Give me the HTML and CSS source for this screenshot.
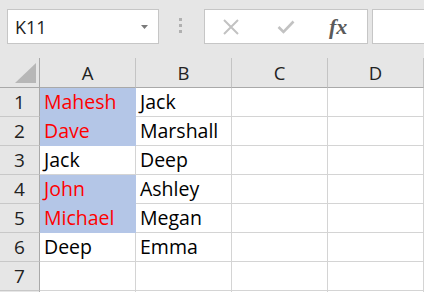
FILE: index.html
```html
<!DOCTYPE html>
<html>
<head>
<meta charset="utf-8">
<link rel="stylesheet" href="styles.css">
</head>
<body>
<div class="toolbar">
  <div class="namebox">
    <span class="ref">K11</span>
    <svg class="caret" width="7" height="4" viewBox="0 0 7 4"><polygon points="0,0 7,0 3.5,4" fill="#7a7a7a"/></svg>
  </div>
  <div class="dots"><i></i><i></i><i></i></div>
  <div class="fbuttons">
    <svg class="ico-x" width="18" height="16" viewBox="0 0 18 16"><path d="M2 1 L16 15 M16 1 L2 15" stroke="#c2c2c2" stroke-width="2" fill="none"/></svg>
    <svg class="ico-check" width="18" height="14" viewBox="0 0 18 14"><path d="M1.5 7 L6.5 12 L16.5 1.5" stroke="#c2c2c2" stroke-width="2.6" fill="none"/></svg>
    <span class="fx">fx</span>
  </div>
  <div class="finput"></div>
</div>
<div class="sheet">
  <div class="corner"><svg width="22" height="21" viewBox="0 0 22 21"><polygon points="21,0 21,20 0,20" fill="#b7b7b7"/></svg></div>
  <div class="ch">A</div><div class="ch">B</div><div class="ch">C</div><div class="ch">D</div>

  <div class="rh">1</div><div class="c sel red">Mahesh</div><div class="c">Jack</div><div class="c"></div><div class="c"></div>
  <div class="rh">2</div><div class="c sel red">Dave</div><div class="c">Marshall</div><div class="c"></div><div class="c"></div>
  <div class="rh">3</div><div class="c">Jack</div><div class="c">Deep</div><div class="c"></div><div class="c"></div>
  <div class="rh">4</div><div class="c sel red">John</div><div class="c">Ashley</div><div class="c"></div><div class="c"></div>
  <div class="rh">5</div><div class="c sel red">Michael</div><div class="c">Megan</div><div class="c"></div><div class="c"></div>
  <div class="rh">6</div><div class="c">Deep</div><div class="c">Emma</div><div class="c"></div><div class="c"></div>
  <div class="rh">7</div><div class="c"></div><div class="c"></div><div class="c"></div><div class="c"></div>
  <div class="rh rh-last"></div><div class="c-last"></div><div class="c-last"></div><div class="c-last"></div><div class="c-last"></div>
</div>
</body>
</html>
```
FILE: styles.css
```css
html, body {
  margin: 0;
  padding: 0;
  background: #ffffff;
  overflow: hidden;
  width: 424px;
  height: 292px;
}
body {
  font-family: "Open Sans", "Liberation Sans", sans-serif;
}
.toolbar {
  height: 58px;
  box-sizing: border-box;
  background: #e6e6e6;
  display: flex;
  align-items: flex-start;
  padding: 9px 0 0 7px;
  overflow: hidden;
}
.namebox {
  width: 152px;
  height: 35px;
  box-sizing: border-box;
  background: #fff;
  border: 1px solid #c6c6c6;
  display: flex;
  align-items: center;
  justify-content: space-between;
  padding: 0 10px 0 7px;
  flex: none;
}
.ref {
  font-size: 18px;
  color: #222;
  line-height: 20px;
}
.caret { display: block; }
.dots {
  margin-left: 20px;
  width: 3px;
  padding-top: 9px;
  display: flex;
  flex-direction: column;
  gap: 3px;
  flex: none;
}
.dots i {
  display: block;
  width: 3px;
  height: 3px;
  background: #b0b0b0;
}
.fbuttons {
  margin-left: 22px;
  width: 164px;
  height: 35px;
  box-sizing: border-box;
  background: #fff;
  border: 1px solid #c6c6c6;
  display: flex;
  align-items: center;
  padding-left: 17px;
  flex: none;
}
.ico-x { display: block; }
.ico-check { display: block; margin-left: 37px; }
.fx {
  margin-left: 34px;
  font-family: "Liberation Serif", "DejaVu Serif", serif;
  font-style: italic;
  font-weight: bold;
  font-size: 22px;
  color: #5a5a5a;
  line-height: 22px;
  letter-spacing: 0;
}
.finput {
  flex: 1;
  margin-left: 4px;
  height: 35px;
  box-sizing: border-box;
  background: #fff;
  border: 1px solid #c6c6c6;
  border-right: none;
}
.sheet {
  display: grid;
  grid-template-columns: 40px 96px 96px 96px 96px;
  grid-template-rows: 30px repeat(7, 29px) 1px;
  background: #fff;
}
.corner {
  background: #e6e6e6;
  border-right: 1px solid #a9a9a9;
  border-bottom: 1px solid #a9a9a9;
  display: flex;
  align-items: flex-start;
  padding: 5px 0 0 15px;
}
.corner svg { display: block; }
.ch {
  background: #e6e6e6;
  border-right: 1px solid #c4c4c4;
  border-bottom: 1px solid #a9a9a9;
  text-align: center;
  font-size: 18.5px;
  line-height: 29px;
  color: #222;
}
.rh {
  background: #e6e6e6;
  border-right: 1px solid #a9a9a9;
  border-bottom: 1px solid #c8c8c8;
  text-align: center;
  font-size: 19px;
  line-height: 28px;
  color: #222;
}
.rh-last { border-bottom: none; }
.c {
  border-right: 1px solid #d4d4d4;
  border-bottom: 1px solid #d4d4d4;
  font-size: 19.5px;
  line-height: 28px;
  padding-left: 4px;
  color: #000;
  white-space: nowrap;
  overflow: hidden;
}
.c-last {
  border-right: 1px solid #d4d4d4;
}
.sel {
  background: #b4c6e7;
  border-bottom-color: #b4c6e7;
  border-right-color: #b4c6e7;
}
.red { color: #ff0000; }
```
